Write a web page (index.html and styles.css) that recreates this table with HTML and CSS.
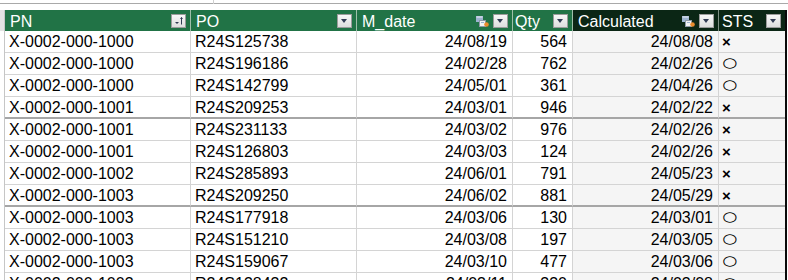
FILE: index.html
```html
<!DOCTYPE html>
<html lang="en">
<head>
<meta charset="utf-8">
<title>Table</title>
<link rel="stylesheet" href="styles.css">
</head>
<body>
<div class="sheet">
  <div class="topstrip"><span class="tick"></span></div>
  <div class="main">
    <div class="gutter"><div class="g-head"></div></div>
    <div class="grid">
      <div class="hc"><span class="lbl">PN</span><span class="dd sorted"><svg width="13" height="12" viewBox="0 0 13 12"><polygon points="3,7 7,7 5,9" fill="#2f3a52"/><line x1="9.5" y1="2.5" x2="9.5" y2="9.5" stroke="#2f3a52" stroke-width="1"/><polygon points="8,4 11,4 9.5,2" fill="#2f3a52"/></svg></span></div>
      <div class="hc"><span class="lbl">PO</span><span class="dd tri"></span></div>
      <div class="hc"><span class="lbl">M_date</span><svg class="calc-ic" width="15" height="14" viewBox="0 0 15 14"><rect x="1" y="2" width="7" height="6" fill="#9db3cf"/><rect x="1.5" y="2.5" width="6" height="1" fill="#e9eef5"/><rect x="4.5" y="6.5" width="6" height="6" fill="#f2f2f2" stroke="#8d99a8"/><rect x="6" y="8" width="3" height="1" fill="#9db3cf"/><circle cx="11.5" cy="10.5" r="2.3" fill="#e98c2e"/></svg><span class="dd tri"></span></div>
      <div class="hc qty"><span class="lbl">Qty</span><span class="dd tri"></span></div>
      <div class="hc dark"><span class="lbl">Calculated</span><svg class="calc-ic" width="15" height="14" viewBox="0 0 15 14"><rect x="1" y="2" width="7" height="6" fill="#9db3cf"/><rect x="1.5" y="2.5" width="6" height="1" fill="#e9eef5"/><rect x="4.5" y="6.5" width="6" height="6" fill="#f2f2f2" stroke="#8d99a8"/><rect x="6" y="8" width="3" height="1" fill="#9db3cf"/><circle cx="11.5" cy="10.5" r="2.3" fill="#e98c2e"/></svg><span class="dd tri"></span></div>
      <div class="hc dark last"><span class="lbl">STS</span><span class="dd tri"></span></div>

      <div class="c l">X-0002-000-1000</div><div class="c l">R24S125738</div><div class="c r">24/08/19</div><div class="c r">564</div><div class="c r g">24/08/08</div><div class="c s g"><span class="x">×</span></div>
      <div class="c l">X-0002-000-1000</div><div class="c l">R24S196186</div><div class="c r">24/02/28</div><div class="c r">762</div><div class="c r g">24/02/26</div><div class="c s g"><span class="o">○</span></div>
      <div class="c l">X-0002-000-1000</div><div class="c l">R24S142799</div><div class="c r">24/05/01</div><div class="c r">361</div><div class="c r g">24/04/26</div><div class="c s g"><span class="o">○</span></div>
      <div class="c l k">X-0002-000-1001</div><div class="c l k">R24S209253</div><div class="c r k">24/03/01</div><div class="c r k">946</div><div class="c r g k">24/02/22</div><div class="c s g k"><span class="x">×</span></div>
      <div class="c l">X-0002-000-1001</div><div class="c l">R24S231133</div><div class="c r">24/03/02</div><div class="c r">976</div><div class="c r g">24/02/26</div><div class="c s g"><span class="x">×</span></div>
      <div class="c l">X-0002-000-1001</div><div class="c l">R24S126803</div><div class="c r">24/03/03</div><div class="c r">124</div><div class="c r g">24/02/26</div><div class="c s g"><span class="x">×</span></div>
      <div class="c l">X-0002-000-1002</div><div class="c l">R24S285893</div><div class="c r">24/06/01</div><div class="c r">791</div><div class="c r g">24/05/23</div><div class="c s g"><span class="x">×</span></div>
      <div class="c l k">X-0002-000-1003</div><div class="c l k">R24S209250</div><div class="c r k">24/06/02</div><div class="c r k">881</div><div class="c r g k">24/05/29</div><div class="c s g k"><span class="x">×</span></div>
      <div class="c l">X-0002-000-1003</div><div class="c l">R24S177918</div><div class="c r">24/03/06</div><div class="c r">130</div><div class="c r g">24/03/01</div><div class="c s g"><span class="o">○</span></div>
      <div class="c l">X-0002-000-1003</div><div class="c l">R24S151210</div><div class="c r">24/03/08</div><div class="c r">197</div><div class="c r g">24/03/05</div><div class="c s g"><span class="o">○</span></div>
      <div class="c l">X-0002-000-1003</div><div class="c l">R24S159067</div><div class="c r">24/03/10</div><div class="c r">477</div><div class="c r g">24/03/06</div><div class="c s g"><span class="o">○</span></div>
      <div class="c l">X-0002-000-1003</div><div class="c l">R24S138432</div><div class="c r">24/03/11</div><div class="c r">330</div><div class="c r g">24/03/08</div><div class="c s g"><span class="o">○</span></div>
    </div>
    <div class="edge"></div>
  </div>
</div>
</body>
</html>
```

FILE: styles.css
```css
html, body {
  margin: 0;
  padding: 0;
  background: #ffffff;
}
body {
  width: 788px;
  height: 280px;
  overflow: hidden;
  font-family: "Liberation Sans", Arial, sans-serif;
  font-size: 16px;
  color: #000;
}
.sheet {
  width: 788px;
  height: 280px;
  overflow: hidden;
}
.topstrip {
  position: relative;
  height: 10px;
  box-sizing: border-box;
  border-top: 2px solid #ffffff;
}
.topstrip::before {
  content: "";
  display: block;
  height: 1px;
  margin-top: 1px;
  background: #a9a9a9;
}
.tick {
  position: absolute;
  left: 213px;
  top: -2px;
  width: 1px;
  height: 4px;
  background: #d0d0d0;
}
.main {
  display: flex;
  align-items: stretch;
}
.gutter {
  width: 5px;
  box-sizing: border-box;
  border-right: 1px solid #c6c6c6;
  flex: none;
}
.g-head {
  height: 21px;
  background: #e3e3e3;
}
.grid {
  display: grid;
  grid-template-columns: 186px 166px 156px 60px 146px 66px;
  grid-auto-rows: 22px;
  grid-template-rows: 21px;
  flex: none;
}
.hc {
  display: flex;
  align-items: center;
  box-sizing: border-box;
  height: 21px;
  background: #217346;
  color: #ffffff;
  border-right: 1px solid #9fbfaa;
  padding-left: 5px;
  line-height: 21px;
}
.hc .lbl {
  padding-top: 1px;
}
.hc.qty {
  padding-left: 2px;
}
.hc.dark {
  background: #0b2615;
  border-right-color: #7d8f83;
}
.hc.last {
  border-right: none;
  padding-left: 3px;
}
.calc-ic {
  margin-left: auto;
  margin-right: 3px;
  display: block;
}
.dd {
  position: relative;
  display: block;
  box-sizing: border-box;
  width: 15px;
  height: 14px;
  margin-right: 4px;
  border: 1px solid #9c9c9c;
  background: linear-gradient(#f7f7f7, #dedede);
}
.lbl + .dd {
  margin-left: auto;
}
.dd.tri::after {
  content: "";
  position: absolute;
  left: 3px;
  top: 4px;
  border-left: 3.5px solid transparent;
  border-right: 3.5px solid transparent;
  border-top: 4px solid #323c55;
}
.dd.sorted svg {
  display: block;
}
.c {
  box-sizing: border-box;
  height: 22px;
  border-right: 1px solid #d4d4d4;
  border-bottom: 1px solid #d4d4d4;
  padding-top: 1px;
  line-height: 20px;
  white-space: nowrap;
  overflow: hidden;
}
.c.l {
  padding-left: 4px;
}
.c.r {
  text-align: right;
  padding-right: 5px;
}
.c.g {
  background: #f5f5f5;
}
.c.s {
  border-right: none;
  padding-left: 3px;
}
.c.k {
  border-bottom: 2px solid #a6a6a6;
}
.x {
  display: inline-block;
  font-size: 15px;
  font-weight: bold;
}
.o {
  display: inline-block;
  font-family: "DejaVu Sans", sans-serif;
  font-size: 14px;
  line-height: 20px;
  transform: translateY(-2px) scale(1.25, 0.95);
  transform-origin: left center;
}
.edge {
  width: 2px;
  background: #0a0a0a;
  flex: none;
}
```
